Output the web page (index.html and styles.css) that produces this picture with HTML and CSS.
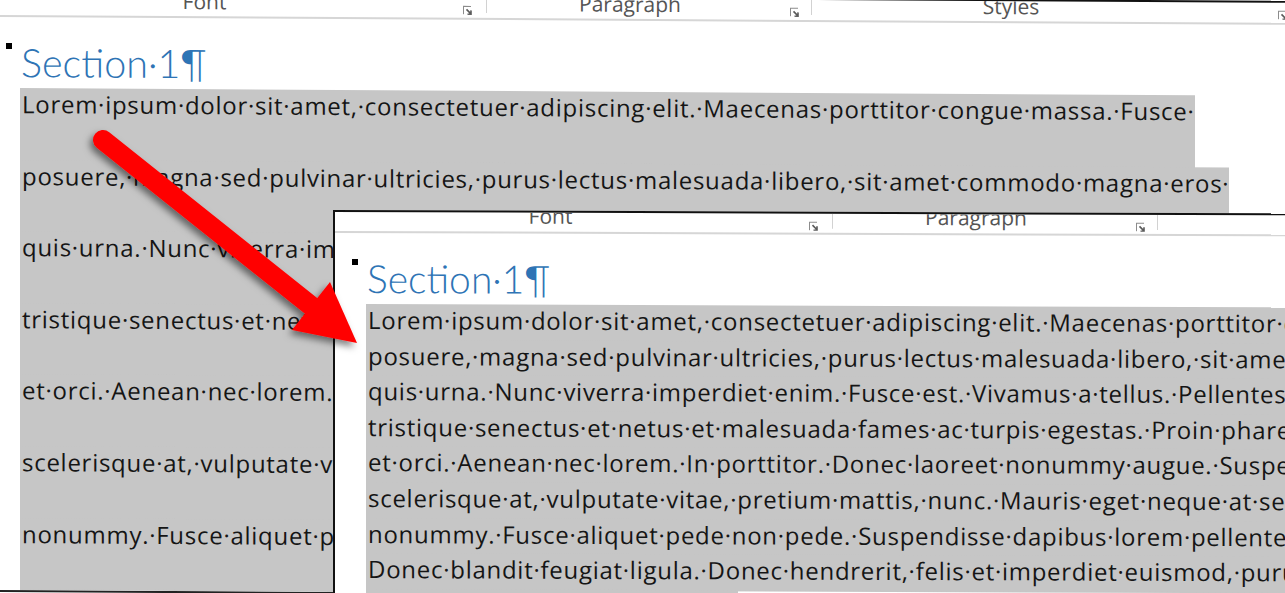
FILE: index.html
```html
<!DOCTYPE html>
<html lang="en">
<head>
<meta charset="utf-8">
<title>Section 1</title>
<link rel="stylesheet" href="styles.css">
</head>
<body>
<div class="screen">
  <div class="layer layer-back">
    <div class="doc">
      <div class="ribbon">
        <div class="group g-font"><span class="glabel">Font</span><svg class="launch" viewBox="0 0 11 10" width="11" height="10"><path d="M1.5 9.5V1.5H9" fill="none" stroke="#8c8c8c" stroke-width="1"/><path d="M4.5 4.5L9 9M9 5.5V9.5H5.5" fill="none" stroke="#5a5a5a" stroke-width="1.6"/></svg></div>
        <div class="group g-para"><span class="glabel">Paragraph</span><svg class="launch" viewBox="0 0 11 10" width="11" height="10"><path d="M1.5 9.5V1.5H9" fill="none" stroke="#8c8c8c" stroke-width="1"/><path d="M4.5 4.5L9 9M9 5.5V9.5H5.5" fill="none" stroke="#5a5a5a" stroke-width="1.6"/></svg></div>
        <div class="group g-styles"><span class="glabel">Styles</span><svg class="launch" viewBox="0 0 11 10" width="11" height="10"><path d="M1.5 9.5V1.5H9" fill="none" stroke="#8c8c8c" stroke-width="1"/><path d="M4.5 4.5L9 9M9 5.5V9.5H5.5" fill="none" stroke="#5a5a5a" stroke-width="1.6"/></svg></div>
      </div>
      <div class="page">
        <div class="title-row"><span class="marker"></span><h1 class="heading">Section·1¶</h1></div>
        <div class="body">
          <div class="line">Lorem·ipsum·dolor·sit·amet,·consectetuer·adipiscing·elit.·Maecenas·porttitor·congue·massa.·Fusce·</div>
          <div class="line">posuere,·magna·sed·pulvinar·ultricies,·purus·lectus·malesuada·libero,·sit·amet·commodo·magna·eros·</div>
          <div class="line">quis·urna.·Nunc·viverra·imperdiet·enim.·Fusce·est.·Vivamus·a·tellus.·Pellentesque·habitant·morbi·</div>
          <div class="line">tristique·senectus·et·netus·et·malesuada·fames·ac·turpis·egestas.·Proin·pharetra·nonummy·pede.·Mauris·</div>
          <div class="line">et·orci.·Aenean·nec·lorem.·In·porttitor.·Donec·laoreet·nonummy·augue.·Suspendisse·dui·purus,·</div>
          <div class="line">scelerisque·at,·vulputate·vitae,·pretium·mattis,·nunc.·Mauris·eget·neque·at·sem·venenatis·eleifend.·Ut·</div>
          <div class="line">nonummy.·Fusce·aliquet·pede·non·pede.·Suspendisse·dapibus·lorem·pellentesque·magna.·Integer·nulla.·</div>
        </div>
      </div>
    </div>
  </div>

  <div class="layer layer-front">
    <div class="doc">
      <div class="ribbon">
        <div class="group g-font"><span class="glabel">Font</span><svg class="launch" viewBox="0 0 11 10" width="11" height="10"><path d="M1.5 9.5V1.5H9" fill="none" stroke="#8c8c8c" stroke-width="1"/><path d="M4.5 4.5L9 9M9 5.5V9.5H5.5" fill="none" stroke="#5a5a5a" stroke-width="1.6"/></svg></div>
        <div class="group g-para"><span class="glabel">Paragraph</span><svg class="launch" viewBox="0 0 11 10" width="11" height="10"><path d="M1.5 9.5V1.5H9" fill="none" stroke="#8c8c8c" stroke-width="1"/><path d="M4.5 4.5L9 9M9 5.5V9.5H5.5" fill="none" stroke="#5a5a5a" stroke-width="1.6"/></svg></div>
        <div class="group g-styles"><span class="glabel">Styles</span><svg class="launch" viewBox="0 0 11 10" width="11" height="10"><path d="M1.5 9.5V1.5H9" fill="none" stroke="#8c8c8c" stroke-width="1"/><path d="M4.5 4.5L9 9M9 5.5V9.5H5.5" fill="none" stroke="#5a5a5a" stroke-width="1.6"/></svg></div>
      </div>
      <div class="page">
        <div class="title-row"><span class="marker"></span><h1 class="heading">Section·1¶</h1></div>
        <div class="body">
          <div class="line">Lorem·ipsum·dolor·sit·amet,·consectetuer·adipiscing·elit.·Maecenas·porttitor·congue·massa.·Fusce·</div>
          <div class="line">posuere,·magna·sed·pulvinar·ultricies,·purus·lectus·malesuada·libero,·sit·amet·commodo·magna·eros·</div>
          <div class="line">quis·urna.·Nunc·viverra·imperdiet·enim.·Fusce·est.·Vivamus·a·tellus.·Pellentesque·habitant·morbi·</div>
          <div class="line">tristique·senectus·et·netus·et·malesuada·fames·ac·turpis·egestas.·Proin·pharetra·nonummy·pede.·Mauris·</div>
          <div class="line">et·orci.·Aenean·nec·lorem.·In·porttitor.·Donec·laoreet·nonummy·augue.·Suspendisse·dui·purus,·</div>
          <div class="line">scelerisque·at,·vulputate·vitae,·pretium·mattis,·nunc.·Mauris·eget·neque·at·sem·venenatis·eleifend.·Ut·</div>
          <div class="line">nonummy.·Fusce·aliquet·pede·non·pede.·Suspendisse·dapibus·lorem·pellentesque·magna.·Integer·nulla.·</div>
          <div class="line">Donec·blandit·feugiat·ligula.·Donec·hendrerit,·felis·et·imperdiet·euismod,·purus·ipsum·pretium·metus,·</div>
          <div class="line">in·lacinia·nulla·nisl·eget·sapien.</div>
        </div>
      </div>
    </div>
  </div>

  <svg class="arrow" width="1285" height="593" viewBox="0 0 1285 593">
    <defs>
      <filter id="shadow" x="-20%" y="-20%" width="140%" height="140%">
        <feDropShadow dx="-3" dy="4" stdDeviation="3.5" flood-color="#000" flood-opacity="0.5"/>
      </filter>
    </defs>
    <g filter="url(#shadow)">
      <line x1="103" y1="140" x2="315" y2="309" stroke="#ff0000" stroke-width="20" stroke-linecap="round"/>
      <polygon points="330,282 292,330 357,343" fill="#ff0000"/>
    </g>
  </svg>
</div>
</body>
</html>
```

FILE: styles.css
```css
* { box-sizing: border-box; }

html, body {
  margin: 0;
  padding: 0;
  background: #ffffff;
}

.screen {
  position: relative;
  width: 1285px;
  height: 593px;
  overflow: hidden;
  background: #ffffff;
}

/* ---------- layers (two stacked screenshots) ---------- */
.layer {
  background: #ffffff;
  overflow: hidden;
  transform-origin: 0 0;
}

.layer-back {
  --dx: 0px;
  margin-top: -7px;
  height: 599px;
  border-top: 2px solid #111;
  border-bottom: 2px solid #222;
  transform: skewY(0.35deg);
}

.layer-front {
  --dx: 11px;
  position: absolute;
  left: 333px;
  top: 210px;
  width: 960px;
  height: 400px;
  border-left: 2px solid #111;
  border-top: 2px solid #111;
  transform: skewY(0.2deg);
}

/* ---------- ribbon labels strip ---------- */
.ribbon {
  display: flex;
  align-items: flex-start;
  height: 22px;
  border-bottom: 2px solid #d6d6d6;
  overflow: hidden;
}

.layer-front .ribbon { height: 21px; }

.group {
  display: flex;
  align-items: flex-start;
  flex: none;
  height: 15px;
  border-right: 1px solid #d2d2d2;
}

.glabel {
  flex: 1;
  display: block;
  margin-top: -5px;
  font-family: "Open Sans", "Noto Sans", sans-serif;
  font-size: 21px;
  line-height: 21px;
  color: #555555;
  text-align: center;
  white-space: nowrap;
}

.layer-front .glabel { margin-top: -7px; }

.launch {
  flex: none;
  display: block;
  margin-top: 7px;
}

.g-font {
  width: 540px;
  margin-left: calc(var(--dx) - 53px);
}
.g-font .launch { margin-right: 13px; }

.g-para { width: 325px; }
.g-para .glabel { padding-right: 16px; }
.g-para .launch { margin-right: 11px; }

.g-styles { width: 500px; border-right: none; }
.g-styles .glabel { flex: none; width: 465px; padding-right: 67px; }

/* ---------- page content ---------- */
.page {
  padding-left: var(--dx);
}

.title-row {
  display: flex;
  align-items: flex-start;
  margin-top: 25px;
  margin-left: 6px;
}

.marker {
  flex: none;
  width: 6px;
  height: 6px;
  margin-top: 1px;
  background: #000000;
}

.heading {
  margin: 0 0 0 9px;
  font-family: Lato, "Open Sans", sans-serif;
  font-weight: 300;
  font-size: 39.5px;
  line-height: 40px;
  color: #2e74b5;
  white-space: nowrap;
}

.layer-front .heading { font-size: 39px; }

.body {
  display: flex;
  flex-direction: column;
  align-items: flex-start;
  margin-top: 6px;
  margin-left: 20px;
}

.line {
  flex: none;
  padding-left: 2px;
  padding-bottom: 3px;
  background: #c6c6c6;
  box-shadow: 0 1px 0 0 #c6c6c6;
  font-family: "Open Sans", "Noto Sans", sans-serif;
  font-size: 24px;
  letter-spacing: 0.73px;
  line-height: 32.6px;
  color: #151515;
  white-space: nowrap;
}

.layer-back .line {
  padding-bottom: 39px;
}

/* ---------- annotation arrow ---------- */
.arrow {
  position: absolute;
  left: 0;
  top: 0;
  pointer-events: none;
}
```
